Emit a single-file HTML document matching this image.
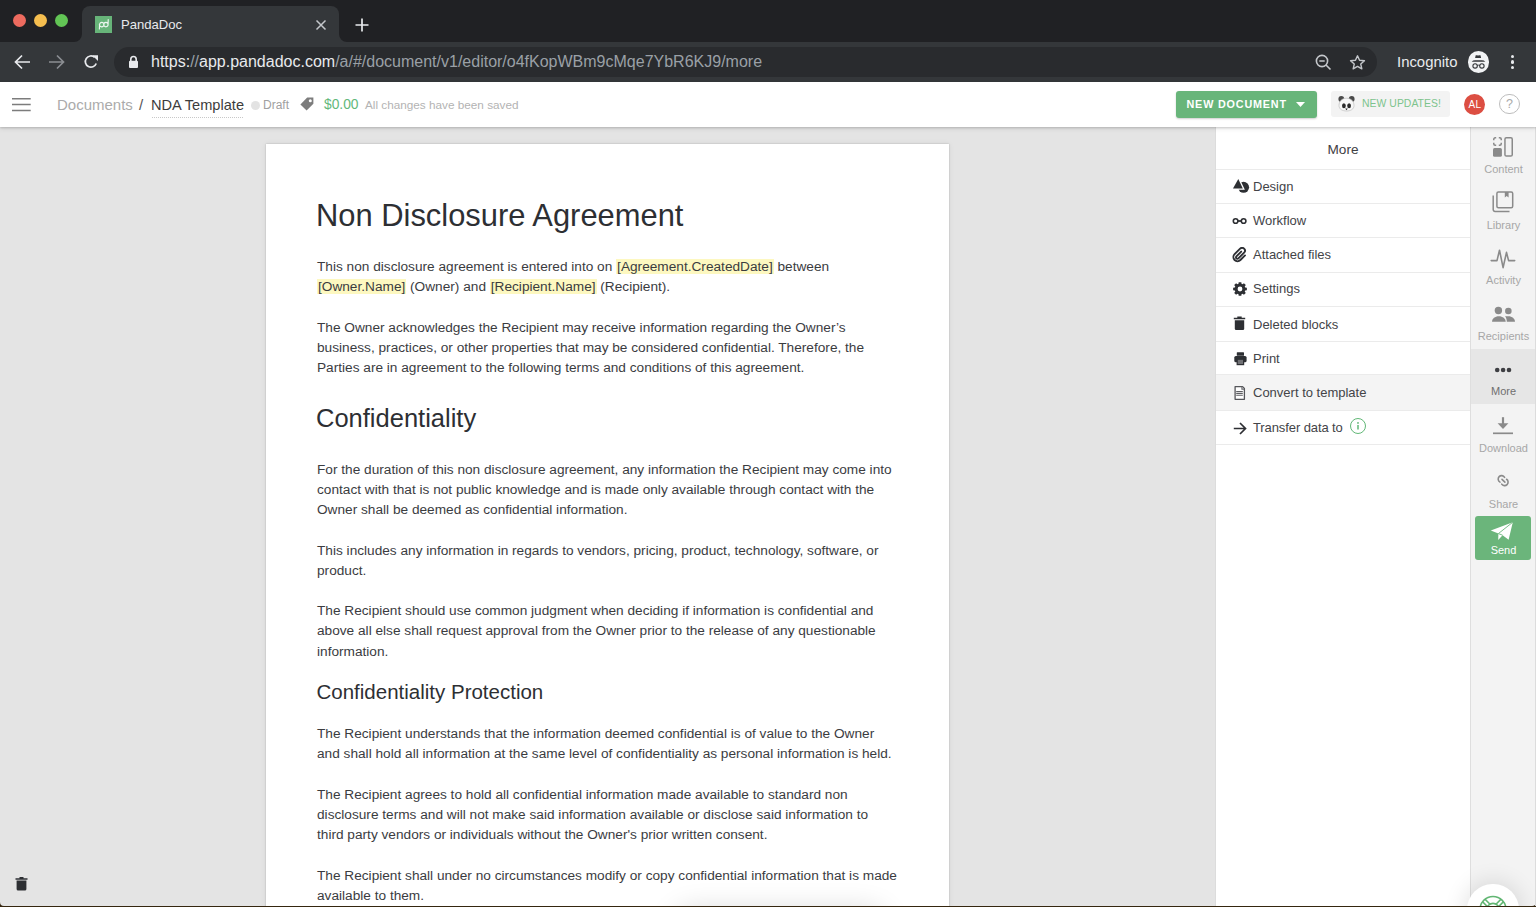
<!DOCTYPE html>
<html><head><meta charset="utf-8">
<style>
*{box-sizing:border-box;margin:0;padding:0}
html,body{width:1536px;height:907px;overflow:hidden;background:#e4e4e4;font-family:"Liberation Sans",sans-serif}
.a{position:absolute}
.nw{white-space:nowrap}
#tabstrip{left:0;top:0;width:1536px;height:42.4px;z-index:3;background:#202124}
#toolbar{left:0;top:42px;width:1536px;height:40px;background:#34373a}
#header{left:0;top:82px;width:1536px;height:45px;background:#fff;box-shadow:0 1px 2px rgba(0,0,0,.16),0 2px 5px rgba(0,0,0,.08);z-index:5}
#main{left:0;top:127px;width:1216px;height:780px;background:#e4e4e4;overflow:hidden}
#page{left:266px;top:144px;width:683px;height:900px;background:#fff;box-shadow:0 0 1.5px rgba(0,0,0,.22),0 0 6px rgba(0,0,0,.07)}
#panel{left:1215px;top:127px;width:255px;height:780px;background:#fff;border-left:1px solid #dcdcdc}
#side{left:1470px;top:127px;width:66px;height:780px;background:#f3f3f3;border-left:1px solid #dedede}
.doc{color:#3b3c3f;font-size:13.66px;line-height:20.25px;white-space:nowrap}
.hl{background:#fdf8c0;padding:0 1px}
.row{left:0;width:254px;height:35px;border-bottom:1px solid #ececec}
.row .t{position:absolute;left:38px;font-size:13px;color:#333;white-space:nowrap}
.slab{position:absolute;left:0;width:66px;text-align:center;font-size:10.8px;color:#a3a3a3;white-space:nowrap}
</style></head><body>
<div id="tabstrip" class="a">
  <div class="a" style="left:13px;top:14px;width:13px;height:13px;border-radius:50%;background:#ed6b5f"></div>
  <div class="a" style="left:34px;top:14px;width:13px;height:13px;border-radius:50%;background:#f5be4f"></div>
  <div class="a" style="left:55px;top:14px;width:13px;height:13px;border-radius:50%;background:#62c555"></div>
  <div class="a" style="left:82px;top:6px;width:257px;height:37px;background:#34373a;border-radius:8px 8px 0 0"></div>
  <svg class="a" style="left:74px;top:34px" width="8" height="8"><path d="M0 8 A8 8 0 0 0 8 0 V8 Z" fill="#34373a"/></svg>
  <svg class="a" style="left:339px;top:34px" width="8" height="8"><path d="M8 8 A8 8 0 0 1 0 0 V8 Z" fill="#34373a"/></svg>
  <div class="a" style="left:95px;top:16px;width:17px;height:17px;background:#67b479"></div>
  <svg class="a" style="left:95px;top:16px" width="17" height="17" viewBox="0 0 17 17"><path d="M4.4 13 L4.6 8.6 A2.2 2.2 0 1 1 6.6 10.8 A2.2 2.2 0 0 1 4.4 8.6 M10.9 6.4 A2.2 2.2 0 1 0 13.1 8.6 A2.2 2.2 0 0 0 10.9 6.4 M13.1 8.6 L13.2 3.6" stroke="#eef6f0" stroke-width="1.15" fill="none" stroke-linecap="round"/></svg>
  <div class="a nw" style="left:121px;top:16px;font-size:13.1px;line-height:18px;color:#e8eaed">PandaDoc</div>
  <svg class="a" style="left:315px;top:19px" width="12" height="12" viewBox="0 0 12 12"><path d="M1.5 1.5 L10.5 10.5 M10.5 1.5 L1.5 10.5" stroke="#c4c7cb" stroke-width="1.5"/></svg>
  <svg class="a" style="left:355px;top:18px" width="14" height="14" viewBox="0 0 14 14"><path d="M7 0.5 V13.5 M0.5 7 H13.5" stroke="#e8eaed" stroke-width="1.7"/></svg>
</div>
<div id="toolbar" class="a">
  <svg class="a" style="left:14px;top:12px" width="17" height="16" viewBox="0 0 17 16"><path d="M16 8 H2 M8 1.5 L1.5 8 L8 14.5" stroke="#e8eaed" stroke-width="1.7" fill="none"/></svg>
  <svg class="a" style="left:48px;top:12px" width="17" height="16" viewBox="0 0 17 16"><path d="M1 8 H15 M9 1.5 L15.5 8 L9 14.5" stroke="#8b8e92" stroke-width="1.7" fill="none"/></svg>
  <svg class="a" style="left:83px;top:12px" width="16" height="16" viewBox="0 0 16 16"><path d="M13.2 9.5 A5.6 5.6 0 1 1 11.6 3.3" stroke="#e8eaed" stroke-width="1.7" fill="none"/><path d="M9.2 1.2 H15 V7 Z" fill="#e8eaed"/></svg>
  <div class="a" style="left:114px;top:5px;width:1263px;height:30px;border-radius:15px;background:#292b2e"></div>
  <svg class="a" style="left:128px;top:13px" width="11" height="14" viewBox="0 0 11 14"><path d="M2.8 6 V4.2 A2.7 2.7 0 0 1 8.2 4.2 V6" stroke="#e8eaed" stroke-width="1.6" fill="none"/><rect x="1" y="5.8" width="9" height="7.2" rx="1" fill="#e8eaed"/></svg>
  <div class="a nw" style="left:151px;top:10px;font-size:16px;line-height:19px;color:#9aa0a6"><span style="color:#e8eaed">https:</span>//<span style="color:#e8eaed">app.pandadoc.com</span>/a/#/document/v1/editor/o4fKopWBm9cMqe7YbR6KJ9/more</div>
  <svg class="a" style="left:1315px;top:12px" width="17" height="17" viewBox="0 0 17 17"><circle cx="7" cy="7" r="5.6" stroke="#c4c7cb" stroke-width="1.6" fill="none"/><path d="M4.3 7 H9.7 M11 11 L15.5 15.5" stroke="#c4c7cb" stroke-width="1.6"/></svg>
  <svg class="a" style="left:1349px;top:12px" width="17" height="17" viewBox="0 0 24 24"><path d="M12 2.5 L14.9 8.9 L21.8 9.6 L16.6 14.2 L18.1 21 L12 17.5 L5.9 21 L7.4 14.2 L2.2 9.6 L9.1 8.9 Z" stroke="#c4c7cb" stroke-width="2" fill="none" stroke-linejoin="round"/></svg>
  <div class="a nw" style="left:1397px;top:11px;font-size:14.9px;line-height:18px;color:#e8eaed">Incognito</div>
  <div class="a" style="left:1467.8px;top:9.2px;width:21.4px;height:21.4px;border-radius:50%;background:#f1f3f4"></div>
  <svg class="a" style="left:1467px;top:9px" width="22" height="22" viewBox="0 0 22 22"><path d="M8.1 6.9 L8.7 4.3 Q10 3.9 11.1 4.6 Q12.3 3.9 13.5 4.3 L14.1 6.9 Z" fill="#34373a"/><path d="M4.7 10.7 Q6 9.3 8 9.3 H14.9 Q17 9.3 18.3 10.7 Z" fill="#34373a"/><circle cx="8.1" cy="14.9" r="2.2" stroke="#34373a" stroke-width="1.1" fill="none"/><circle cx="14.9" cy="14.9" r="2.2" stroke="#34373a" stroke-width="1.1" fill="none"/><path d="M10.2 14.5 Q11.5 13.8 12.8 14.5" stroke="#34373a" stroke-width="0.9" fill="none"/></svg>
  <div class="a" style="left:1511px;top:13px;width:3.4px;height:3.4px;border-radius:50%;background:#e8eaed"></div>
  <div class="a" style="left:1511px;top:18.4px;width:3.4px;height:3.4px;border-radius:50%;background:#e8eaed"></div>
  <div class="a" style="left:1511px;top:23.8px;width:3.4px;height:3.4px;border-radius:50%;background:#e8eaed"></div>
</div>
<div id="header" class="a">
  <svg class="a" style="left:11px;top:14px" width="21" height="18" viewBox="0 0 21 18"><path d="M1 2.75 H19.7 M1 8.5 H19.7 M1 14.4 H19.7" stroke="#7c7c7c" stroke-width="1.5"/></svg>
  <div class="a nw" style="left:57px;top:14px;font-size:15px;line-height:17px;color:#ababab">Documents</div>
  <div class="a nw" style="left:139px;top:14.2px;font-size:15px;line-height:17px;color:#555">/</div>
  <div class="a nw" style="left:151px;top:14.7px;font-size:14.6px;line-height:17px;color:#3c3c3c">NDA Template</div>
  <div class="a" style="left:152px;top:35px;width:91px;height:0;border-top:1px dotted #c8c8c8"></div>
  <div class="a" style="left:251px;top:18.5px;width:9px;height:9px;border-radius:50%;background:#e3e3e3"></div>
  <div class="a nw" style="left:263px;top:16px;font-size:12px;line-height:14px;color:#a0a0a0">Draft</div>
  <svg class="a" style="left:300px;top:15px" width="14" height="14" viewBox="0 0 14 14"><path d="M7.2 0.6 H13.4 V6.8 L6.6 13.6 L0.4 7.4 Z" fill="#7d7d7d" transform="rotate(0)"/><circle cx="10.3" cy="3.7" r="1.5" fill="#fff"/></svg>
  <div class="a nw" style="left:324px;top:15px;font-size:13.8px;line-height:16px;color:#62b87b">$0.00</div>
  <div class="a nw" style="left:365px;top:16px;font-size:11.75px;line-height:14px;color:#b3b3b3">All changes have been saved</div>
  <div class="a" style="left:1176px;top:9px;width:141px;height:27.4px;border-radius:3px;background:#68b57a;box-shadow:0 1px 2px rgba(0,0,0,.2)"></div>
  <div class="a nw" style="left:1186.5px;top:15.8px;font-size:10.8px;line-height:13px;font-weight:700;color:#fff;letter-spacing:0.82px">NEW DOCUMENT</div>
  <svg class="a" style="left:1296px;top:20px" width="9" height="5" viewBox="0 0 9 5"><path d="M0 0 H9 L4.5 5 Z" fill="#fff"/></svg>
  <div class="a" style="left:1331px;top:9px;width:119px;height:26px;border-radius:3px;background:#f3f3f3"></div>
  <svg class="a" style="left:1337px;top:13px" width="19" height="17" viewBox="0 0 19 17"><circle cx="4.3" cy="3.9" r="2.9" fill="#4a4a4a"/><circle cx="14.7" cy="3.9" r="2.9" fill="#4a4a4a"/><path d="M9.5 3.2 C14.2 3.2 17 6.4 17 10.6 C17 14.2 13.6 16 9.5 16 C5.4 16 2 14.2 2 10.6 C2 6.4 4.8 3.2 9.5 3.2 Z" fill="#f7f7f7" stroke="#b5b5b5" stroke-width=".6"/><ellipse cx="6.9" cy="10.7" rx="1.9" ry="2.5" fill="#2b2b2b"/><ellipse cx="12.1" cy="10.7" rx="1.9" ry="2.5" fill="#2b2b2b"/><path d="M8.2 13.6 H10.8 L9.5 15.3 Z" fill="#222"/></svg>
  <div class="a nw" style="left:1362px;top:15.2px;font-size:10.4px;line-height:13px;color:#7dc38d;letter-spacing:0.05px">NEW UPDATES!</div>
  <div class="a" style="left:1464px;top:11.5px;width:21px;height:21px;border-radius:50%;background:#dc4e42"></div>
  <div class="a nw" style="left:1464.5px;top:16.5px;width:21px;text-align:center;font-size:10px;line-height:12px;letter-spacing:0.4px;color:#fff">AL</div>
  <div class="a" style="left:1499px;top:11.8px;width:20.5px;height:20.5px;border-radius:50%;border:1.9px solid #bdbdbd"></div>
  <div class="a nw" style="left:1499.2px;top:14.8px;width:20.5px;text-align:center;font-size:12.5px;line-height:14px;color:#a9a9a9">?</div>
</div>
<div id="main" class="a"></div>
<div id="page" class="a"></div>
<div class="a nw" style="left:316px;top:198.4px;font-size:30.9px;line-height:36px;color:#2d2f33">Non Disclosure Agreement</div>
<div class="a doc" style="left:317px;top:257px">This non disclosure agreement is entered into on <span class="hl">[Agreement.CreatedDate]</span> between<br><span class="hl">[Owner.Name]</span> (Owner) and <span class="hl">[Recipient.Name]</span> (Recipient).</div>
<div class="a doc" style="left:317px;top:317.9px">The Owner acknowledges the Recipient may receive information regarding the Owner’s<br>business, practices, or other properties that may be considered confidential. Therefore, the<br>Parties are in agreement to the following terms and conditions of this agreement.</div>
<div class="a nw" style="left:316px;top:402.9px;font-size:25.5px;line-height:30px;color:#2d2f33">Confidentiality</div>
<div class="a doc" style="left:317px;top:459.6px">For the duration of this non disclosure agreement, any information the Recipient may come into<br>contact with that is not public knowledge and is made only available through contact with the<br>Owner shall be deemed as confidential information.</div>
<div class="a doc" style="left:317px;top:541.2px">This includes any information in regards to vendors, pricing, product, technology, software, or<br>product.</div>
<div class="a doc" style="left:317px;top:601.1px">The Recipient should use common judgment when deciding if information is confidential and<br>above all else shall request approval from the Owner prior to the release of any questionable<br>information.</div>
<div class="a nw" style="left:316.5px;top:679.65px;font-size:20.5px;line-height:24px;color:#2d2f33">Confidentiality Protection</div>
<div class="a doc" style="left:317px;top:724px">The Recipient understands that the information deemed confidential is of value to the Owner<br>and shall hold all information at the same level of confidentiality as personal information is held.</div>
<div class="a doc" style="left:317px;top:784.9px">The Recipient agrees to hold all confidential information made available to standard non<br>disclosure terms and will not make said information available or disclose said information to<br>third party vendors or individuals without the Owner's prior written consent.</div>
<div class="a doc" style="left:317px;top:865.9px">The Recipient shall under no circumstances modify or copy confidential information that is made<br>available to them.</div>
<svg class="a" style="left:15px;top:876px" width="13" height="15" viewBox="0 0 13 15"><path d="M4.5 1 H8.5 V2.2 H12.5 V3.8 H0.5 V2.2 H4.5 Z" fill="#2d2f33"/><path d="M1.6 4.6 H11.4 V13 A1.5 1.5 0 0 1 9.9 14.5 H3.1 A1.5 1.5 0 0 1 1.6 13 Z" fill="#2d2f33"/></svg>

<div id="panel" class="a"></div>
<div class="a nw" style="left:1216px;top:140.5px;width:254px;text-align:center;font-size:13.6px;line-height:17px;color:#3f4044">More</div>
<div class="a" style="left:1216px;top:374.5px;width:254px;height:36px;background:#f4f4f4"></div>
<div class="a" style="left:1216px;top:169px;width:254px;height:1px;background:#ebebeb"></div>
<div class="a" style="left:1216px;top:203px;width:254px;height:1px;background:#ebebeb"></div>
<div class="a" style="left:1216px;top:237px;width:254px;height:1px;background:#ebebeb"></div>
<div class="a" style="left:1216px;top:272px;width:254px;height:1px;background:#ebebeb"></div>
<div class="a" style="left:1216px;top:306px;width:254px;height:1px;background:#ebebeb"></div>
<div class="a" style="left:1216px;top:340.5px;width:254px;height:1px;background:#ebebeb"></div>
<div class="a" style="left:1216px;top:374px;width:254px;height:1px;background:#ebebeb"></div>
<div class="a" style="left:1216px;top:410px;width:254px;height:1px;background:#ebebeb"></div>
<div class="a" style="left:1216px;top:444px;width:254px;height:1px;background:#ebebeb"></div>
<div class="a nw" style="left:1253px;top:178.6px;font-size:13px;line-height:16px;color:#434448">Design</div>
<div class="a nw" style="left:1253px;top:213.0px;font-size:13px;line-height:16px;color:#434448">Workflow</div>
<div class="a nw" style="left:1253px;top:247.2px;font-size:13px;line-height:16px;color:#434448">Attached files</div>
<div class="a nw" style="left:1253px;top:281.4px;font-size:13px;line-height:16px;color:#434448">Settings</div>
<div class="a nw" style="left:1253px;top:316.7px;font-size:13px;line-height:16px;color:#434448">Deleted blocks</div>
<div class="a nw" style="left:1253px;top:350.9px;font-size:13px;line-height:16px;color:#434448">Print</div>
<div class="a nw" style="left:1253px;top:384.8px;font-size:13px;line-height:16px;color:#434448">Convert to template</div>
<div class="a nw" style="left:1253px;top:419.8px;font-size:13px;letter-spacing:-0.1px;line-height:16px;color:#434448">Transfer data to</div>
<svg class="a" style="left:1232px;top:178px" width="18" height="16" viewBox="0 0 18 16"><circle cx="11.6" cy="9.3" r="5.5" fill="#2d2f33"/><path d="M6.3 1 L10.8 10.4 H1 Z" fill="#fff" stroke="#fff" stroke-width="2.6" stroke-linejoin="miter"/><path d="M6.3 1 L10.8 10.4 H1 Z" fill="#2d2f33"/></svg>
<svg class="a" style="left:1232px;top:216px" width="16" height="10" viewBox="0 0 16 10"><circle cx="3.6" cy="5" r="2.3" stroke="#2d2f33" stroke-width="1.6" fill="none"/><circle cx="11.6" cy="5" r="2.3" stroke="#2d2f33" stroke-width="1.6" fill="none"/><path d="M5.9 5 H9.3" stroke="#2d2f33" stroke-width="1.8"/></svg>
<svg class="a" style="left:1232px;top:247px" width="16" height="16" viewBox="0 0 16 16"><path d="M9.2 4.6 L4.4 9.4 A1.4 1.4 0 0 0 6.4 11.4 L12.1 5.7 A2.8 2.8 0 0 0 8.1 1.7 L2.6 7.2 A4.1 4.1 0 0 0 8.4 13 L13 8.4" stroke="#2d2f33" stroke-width="1.9" fill="none" stroke-linecap="round"/></svg>
<svg class="a" style="left:1232px;top:281px" width="16" height="16" viewBox="0 0 16 16"><path fill-rule="evenodd" fill="#2d2f33" d="M6.51 2.81 L6.66 1.13 L9.34 1.13 L9.49 2.81 L10.62 3.28 L11.91 2.20 L13.80 4.09 L12.72 5.38 L13.19 6.51 L14.87 6.66 L14.87 9.34 L13.19 9.49 L12.72 10.62 L13.80 11.91 L11.91 13.80 L10.62 12.72 L9.49 13.19 L9.34 14.87 L6.66 14.87 L6.51 13.19 L5.38 12.72 L4.09 13.80 L2.20 11.91 L3.28 10.62 L2.81 9.49 L1.13 9.34 L1.13 6.66 L2.81 6.51 L3.28 5.38 L2.20 4.09 L4.09 2.20 L5.38 3.28 Z M10.4 8 A2.4 2.4 0 1 0 5.6 8 A2.4 2.4 0 1 0 10.4 8 Z"/></svg>
<svg class="a" style="left:1233px;top:316px" width="13" height="15" viewBox="0 0 13 15"><path d="M4.3 0.6 H8.7 V1.8 H12.2 V3.3 H0.8 V1.8 H4.3 Z" fill="#2d2f33"/><path d="M1.8 4.2 H11.2 V12.8 A1.3 1.3 0 0 1 9.9 14.1 H3.1 A1.3 1.3 0 0 1 1.8 12.8 Z" fill="#2d2f33"/></svg>
<svg class="a" style="left:1233.5px;top:352px" width="13" height="14" viewBox="0 0 13 14"><rect x="2.8" y="0.3" width="7.2" height="3.4" rx="0.5" fill="#2d2f33"/><rect x="0.3" y="3.9" width="12.3" height="6.4" rx="1.6" fill="#2d2f33"/><rect x="3.2" y="7.2" width="6.4" height="5.4" fill="#707175" stroke="#2d2f33" stroke-width="1.2"/></svg>
<svg class="a" style="left:1230px;top:382px" width="20" height="22" viewBox="0 0 20 22"><path d="M5.1 4.6 H12.6 L14.4 6.4 V17.3 H5.1 Z" stroke="#55565a" stroke-width="1.3" fill="#fff" stroke-linejoin="round"/><path d="M11.9 4.8 V7.1 H14.2" stroke="#6a6b6f" stroke-width="1.1" fill="none"/><path d="M6.2 9.6 H12.8 M6.2 11.5 H12.8 M6.2 13.2 H12.8" stroke="#5d5e62" stroke-width="1.05"/></svg>
<svg class="a" style="left:1233px;top:422px" width="14" height="13" viewBox="0 0 14 13"><path d="M0.8 6.5 H12.4 M7 1 L12.5 6.5 L7 12" stroke="#2d2f33" stroke-width="1.7" fill="none"/></svg>
<div class="a" style="left:1350.3px;top:418px;width:16px;height:16px;border-radius:50%;border:1.3px solid #62b877"></div>
<svg class="a" style="left:1350.3px;top:418px" width="16" height="16" viewBox="0 0 16 16"><circle cx="8" cy="4.9" r="0.95" fill="#62b877"/><path d="M8 7 V11.6" stroke="#62b877" stroke-width="1.5"/></svg>

<div id="side" class="a"></div>
<div class="a" style="left:1471px;top:348.8px;width:65px;height:55.2px;background:#e6e6e6"></div>
<svg class="a" style="left:1492px;top:136px" width="22" height="22" viewBox="0 0 22 22"><path d="M1.75 4.2 V3.2 A1.45 1.45 0 0 1 3.2 1.75 H4.2 M6.8 1.75 H7.8 A1.45 1.45 0 0 1 9.25 3.2 V4.2 M9.25 6.8 V7.8 A1.45 1.45 0 0 1 7.8 9.25 H6.8 M4.2 9.25 H3.2 A1.45 1.45 0 0 1 1.75 7.8 V6.8" stroke="#8a8a8a" stroke-width="1.5" fill="none"/><rect x="1" y="12" width="8.9" height="8.8" rx="1.5" fill="#8a8a8a"/><rect x="12.95" y="1.75" width="7.3" height="18.3" rx="1.4" stroke="#8a8a8a" stroke-width="1.5" fill="none"/></svg>
<svg class="a" style="left:1492px;top:191px" width="22" height="22" viewBox="0 0 22 22"><path d="M1.2 4.5 V18.6 A1.8 1.8 0 0 0 3 20.4 H17.5" stroke="#8a8a8a" stroke-width="1.5" fill="none"/><rect x="4.9" y="1" width="15.8" height="15.8" rx="1.5" stroke="#8a8a8a" stroke-width="1.5" fill="none"/><path d="M12.8 1 H16.6 V6.6 L14.7 5.1 L12.8 6.6 Z" fill="#8a8a8a"/></svg>
<svg class="a" style="left:1490px;top:249px" width="26" height="20" viewBox="0 0 26 20"><path d="M1.2 11.6 H7 L9.5 1.2 L13.1 18.6 L16.5 3.4 L18.6 11.6 H24.7" stroke="#8a8a8a" stroke-width="1.6" fill="none" stroke-linejoin="round" stroke-linecap="round"/></svg>
<svg class="a" style="left:1491px;top:306px" width="25" height="17" viewBox="0 0 25 17"><circle cx="7.4" cy="4.5" r="3.7" fill="#8a8a8a"/><circle cx="17.35" cy="5" r="3.3" fill="#8a8a8a"/><path d="M1 15.8 C1 12.5 4 10.2 7.85 10.2 C11.7 10.2 14.7 12.5 14.7 15.8 Z" fill="#8a8a8a"/><path d="M14 10.3 H17.5 C21 10.3 24 12.7 24 15.8 H15.8 C15.8 13.5 15.2 11.6 14 10.3 Z" fill="#8a8a8a"/></svg>
<svg class="a" style="left:1494px;top:367px" width="18" height="6" viewBox="0 0 18 6"><circle cx="3.2" cy="3" r="2.3" fill="#3e3f43"/><circle cx="9.1" cy="3" r="2.3" fill="#3e3f43"/><circle cx="15" cy="3" r="2.3" fill="#3e3f43"/></svg>
<svg class="a" style="left:1492px;top:416px" width="22" height="19" viewBox="0 0 22 19"><path d="M11 1.2 V8" stroke="#8a8a8a" stroke-width="2.2"/><path d="M5.6 7.2 H16.4 L11 13 Z" fill="#8a8a8a"/><path d="M1 17.3 H21" stroke="#8a8a8a" stroke-width="1.7"/></svg>
<svg class="a" style="left:1492px;top:470px" width="22" height="22" viewBox="0 0 22 22"><path d="M12.6 7.3 A3.45 3.45 0 1 0 8 12.1 M14.56 9.22 A3.5 3.5 0 1 1 9.7 14.08 M10 9.3 L12.9 12.1" stroke="#8a8a8a" stroke-width="1.6" fill="none" stroke-linecap="round"/></svg>
<div class="a" style="left:1475px;top:516.2px;width:55.5px;height:43.8px;border-radius:3px;background:#6bb57b"></div>
<svg class="a" style="left:1490px;top:521px" width="24" height="20" viewBox="0 0 24 20"><path d="M0.8 9.6 L22.8 1.2 L18.6 18.8 L12.6 14.2 L8.2 19 L8.4 12.6 Z" fill="#fff"/><path d="M8.4 12.6 L22.8 1.2 M8.4 12.6 L12.6 14.2" stroke="#6bb57b" stroke-width="0.9" fill="none"/></svg>
<div class="a nw" style="left:1470.5px;top:163.2px;width:66px;text-align:center;font-size:11px;line-height:13px;color:#a7a7a7">Content</div>
<div class="a nw" style="left:1470.5px;top:218.9px;width:66px;text-align:center;font-size:11px;line-height:13px;color:#a7a7a7">Library</div>
<div class="a nw" style="left:1470.5px;top:273.8px;width:66px;text-align:center;font-size:11px;line-height:13px;color:#a7a7a7">Activity</div>
<div class="a nw" style="left:1470.5px;top:329.7px;width:66px;text-align:center;font-size:11px;line-height:13px;color:#a7a7a7">Recipients</div>
<div class="a nw" style="left:1470.5px;top:384.7px;width:66px;text-align:center;font-size:11px;line-height:13px;color:#6f6f6f">More</div>
<div class="a nw" style="left:1470.5px;top:441.8px;width:66px;text-align:center;font-size:11px;line-height:13px;color:#a7a7a7">Download</div>
<div class="a nw" style="left:1470.5px;top:497.6px;width:66px;text-align:center;font-size:11px;line-height:13px;color:#a7a7a7">Share</div>
<div class="a nw" style="left:1470.5px;top:544.2px;width:66px;text-align:center;font-size:11px;line-height:13px;color:#ffffff">Send</div>

<div class="a" style="left:675px;top:912px;width:210px;height:40px;border-radius:20px;background:#fff;box-shadow:0 0 28px 3px rgba(0,0,0,.15)"></div>
<div class="a" style="left:1467.2px;top:883.9px;width:51.6px;height:51.6px;border-radius:50%;background:#fff;box-shadow:0 0 22px 3px rgba(0,0,0,.11)"></div>
<svg class="a" style="left:1467px;top:880px" width="52" height="27" viewBox="0 0 52 27"><g transform="translate(26 29.7)" stroke="#62b673" stroke-width="1.6" fill="none"><circle r="13.15"/><circle r="6.3"/><path d="M-5.69 -3.21 L-10.54 -8.06 M-3.21 -5.69 L-8.06 -10.54 M5.69 -3.21 L10.54 -8.06 M3.21 -5.69 L8.06 -10.54"/></g></svg>
<div class="a" style="left:0;top:906px;width:1536px;height:1px;background:#35260f"></div>
<svg class="a" style="left:0;top:902px" width="5" height="5"><path d="M0 0 A4 4 0 0 0 4 4 H5 V5 H0 Z" fill="#35260f"/></svg>
<svg class="a" style="left:1531px;top:902px" width="5" height="5"><path d="M5 0 A4 4 0 0 1 1 4 H0 V5 H5 Z" fill="#35260f"/></svg>
<div class="a" style="left:1535px;top:127px;width:1px;height:779px;background:#dcdcdc"></div>
</body></html>
